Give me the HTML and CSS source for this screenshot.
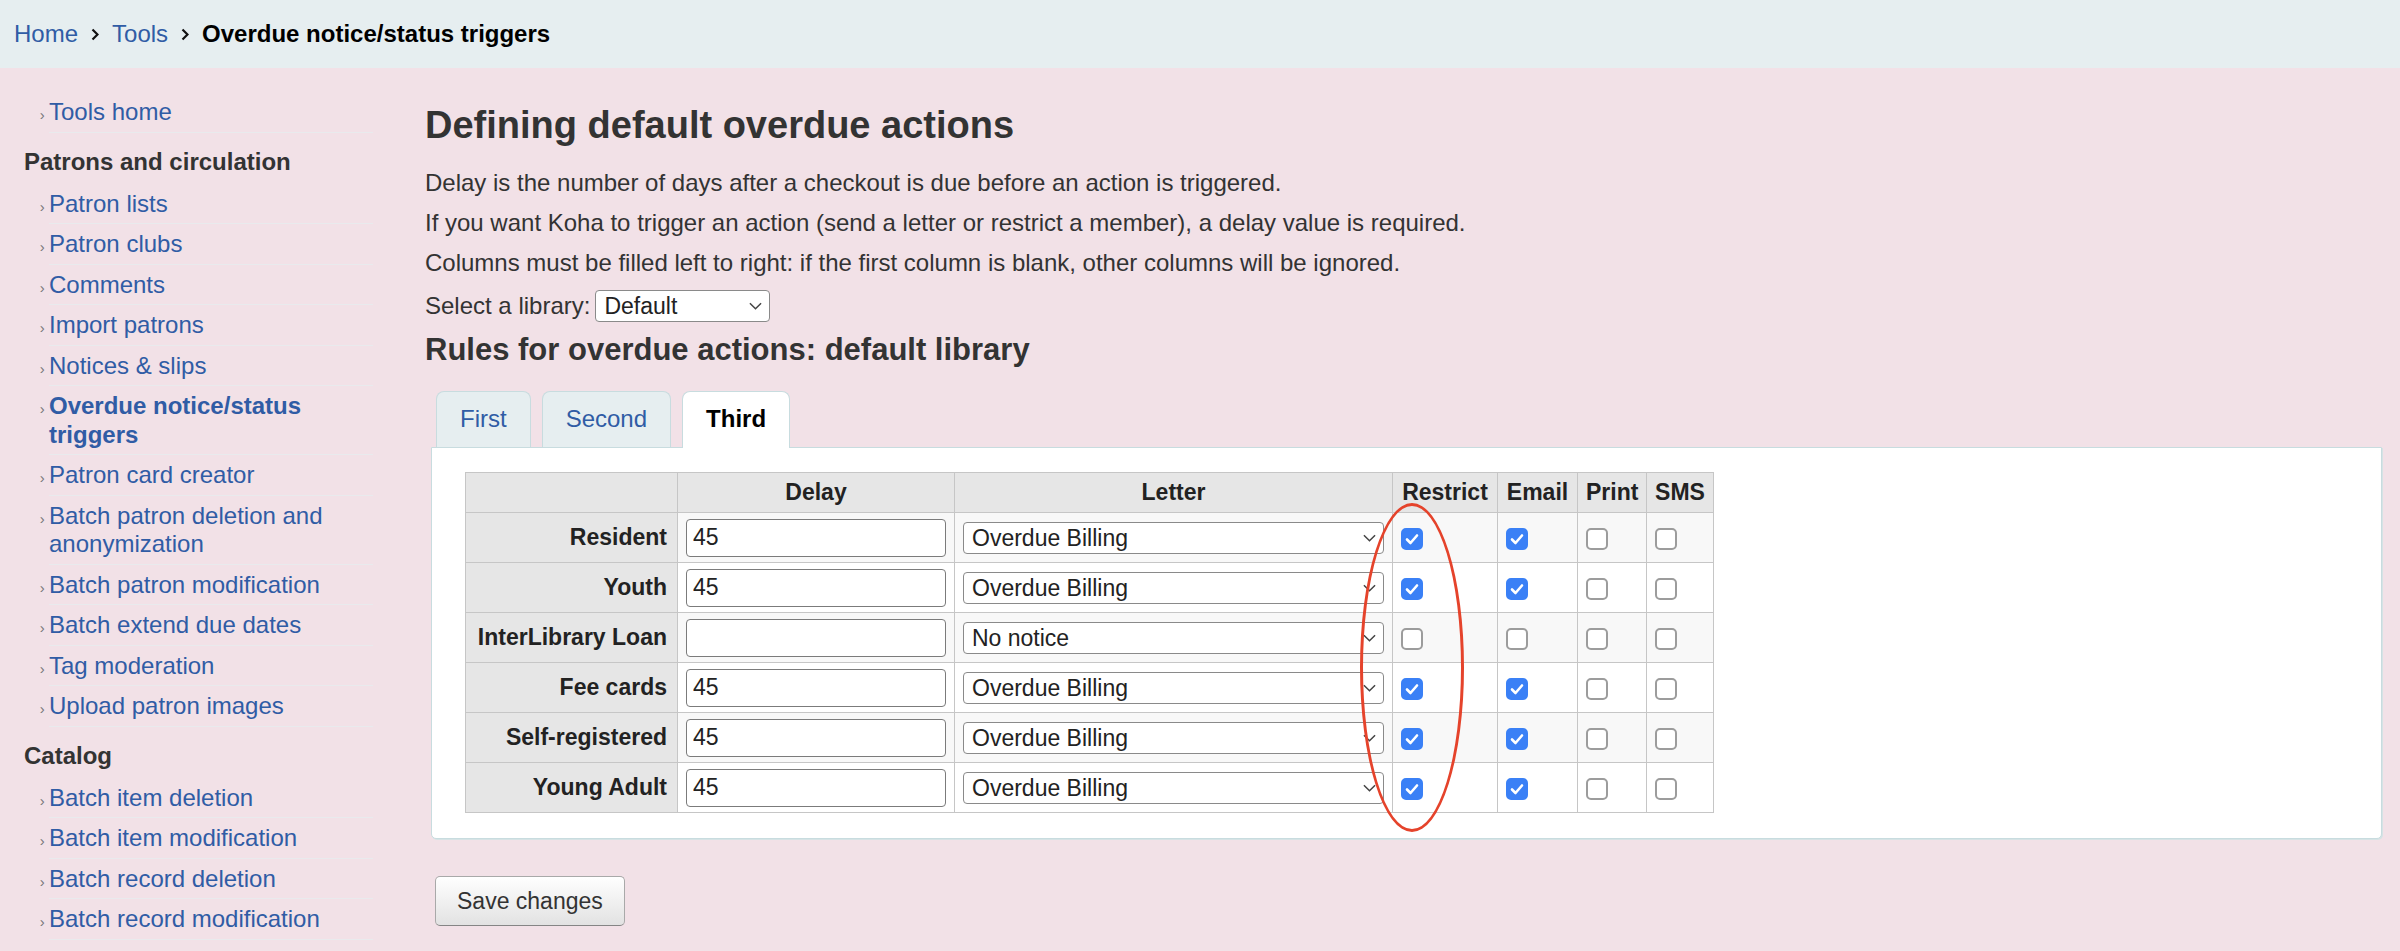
FILE: index.html
```html
<!DOCTYPE html>
<html lang="en">
<head>
<meta charset="UTF-8" />
<title>Overdue notice/status triggers › Tools › Koha</title>
<link rel="stylesheet" href="styles.css">
</head>
<body>

<nav class="breadcrumbs">
  <a href="#">Home</a>
  <svg class="crumb-sep" viewBox="0 0 8 13"><path d="M1.5 1.5 L6.5 6.5 L1.5 11.5" /></svg>
  <a href="#">Tools</a>
  <svg class="crumb-sep" viewBox="0 0 8 13"><path d="M1.5 1.5 L6.5 6.5 L1.5 11.5" /></svg>
  <span class="current">Overdue notice/status triggers</span>
</nav>

<div class="layout">
  <aside class="sidenav">
    <ul>
      <li><a href="#">Tools home</a></li>
    </ul>
    <h5>Patrons and circulation</h5>
    <ul>
      <li><a href="#">Patron lists</a></li>
      <li><a href="#">Patron clubs</a></li>
      <li><a href="#">Comments</a></li>
      <li><a href="#">Import patrons</a></li>
      <li><a href="#">Notices &amp; slips</a></li>
      <li class="active"><a href="#">Overdue notice/status triggers</a></li>
      <li><a href="#">Patron card creator</a></li>
      <li><a href="#">Batch patron deletion and anonymization</a></li>
      <li><a href="#">Batch patron modification</a></li>
      <li><a href="#">Batch extend due dates</a></li>
      <li><a href="#">Tag moderation</a></li>
      <li><a href="#">Upload patron images</a></li>
    </ul>
    <h5>Catalog</h5>
    <ul>
      <li><a href="#">Batch item deletion</a></li>
      <li><a href="#">Batch item modification</a></li>
      <li><a href="#">Batch record deletion</a></li>
      <li><a href="#">Batch record modification</a></li>
      <li><a href="#">Automatic item modifications by age</a></li>
    </ul>
  </aside>

  <main class="content">
    <h1>Defining default overdue actions</h1>
    <p>Delay is the number of days after a checkout is due before an action is triggered.</p>
    <p>If you want Koha to trigger an action (send a letter or restrict a member), a delay value is required.</p>
    <p>Columns must be filled left to right: if the first column is blank, other columns will be ignored.</p>

    <form>
      <div class="library-select">
        <label for="branch">Select a library:</label>
        <span class="select-wrap">
          <select id="branch" class="library"><option>Default</option></select>
          <svg class="chevron" viewBox="0 0 14 8"><path d="M1 1 L7 7 L13 1" /></svg>
        </span>
      </div>

      <h3>Rules for overdue actions: default library</h3>

      <div class="tabs-wrap">
        <ul class="tabs">
          <li><a href="#">First</a></li>
          <li><a href="#">Second</a></li>
          <li class="active"><a href="#">Third</a></li>
        </ul>

        <div class="panel">
          <table class="rules">
            <colgroup>
              <col style="width: 212px">
              <col style="width: 277px">
              <col style="width: 438px">
              <col style="width: 105px">
              <col style="width: 80px">
              <col style="width: 69px">
              <col style="width: 67px">
            </colgroup>
            <thead>
              <tr>
                <th></th>
                <th>Delay</th>
                <th>Letter</th>
                <th>Restrict</th>
                <th>Email</th>
                <th>Print</th>
                <th>SMS</th>
              </tr>
            </thead>
            <tbody>
              <tr>
                <th class="category">Resident</th>
                <td><input type="text" class="delay" value="45"></td>
                <td><span class="select-wrap wide"><select><option>Overdue Billing</option></select><svg class="chevron" viewBox="0 0 14 8"><path d="M1 1 L7 7 L13 1" /></svg></span></td>
                <td><span class="check"><input type="checkbox" checked><svg viewBox="0 0 22 22"><path d="M6 11.5 L9.5 15 L16 7.5" /></svg></span></td>
                <td><span class="check"><input type="checkbox" checked><svg viewBox="0 0 22 22"><path d="M6 11.5 L9.5 15 L16 7.5" /></svg></span></td>
                <td><span class="check"><input type="checkbox"><svg viewBox="0 0 22 22"><path d="M6 11.5 L9.5 15 L16 7.5" /></svg></span></td>
                <td><span class="check"><input type="checkbox"><svg viewBox="0 0 22 22"><path d="M6 11.5 L9.5 15 L16 7.5" /></svg></span></td>
              </tr>
              <tr>
                <th class="category">Youth</th>
                <td><input type="text" class="delay" value="45"></td>
                <td><span class="select-wrap wide"><select><option>Overdue Billing</option></select><svg class="chevron" viewBox="0 0 14 8"><path d="M1 1 L7 7 L13 1" /></svg></span></td>
                <td><span class="check"><input type="checkbox" checked><svg viewBox="0 0 22 22"><path d="M6 11.5 L9.5 15 L16 7.5" /></svg></span></td>
                <td><span class="check"><input type="checkbox" checked><svg viewBox="0 0 22 22"><path d="M6 11.5 L9.5 15 L16 7.5" /></svg></span></td>
                <td><span class="check"><input type="checkbox"><svg viewBox="0 0 22 22"><path d="M6 11.5 L9.5 15 L16 7.5" /></svg></span></td>
                <td><span class="check"><input type="checkbox"><svg viewBox="0 0 22 22"><path d="M6 11.5 L9.5 15 L16 7.5" /></svg></span></td>
              </tr>
              <tr>
                <th class="category">InterLibrary Loan</th>
                <td><input type="text" class="delay" value=""></td>
                <td><span class="select-wrap wide"><select><option>No notice</option></select><svg class="chevron" viewBox="0 0 14 8"><path d="M1 1 L7 7 L13 1" /></svg></span></td>
                <td><span class="check"><input type="checkbox"><svg viewBox="0 0 22 22"><path d="M6 11.5 L9.5 15 L16 7.5" /></svg></span></td>
                <td><span class="check"><input type="checkbox"><svg viewBox="0 0 22 22"><path d="M6 11.5 L9.5 15 L16 7.5" /></svg></span></td>
                <td><span class="check"><input type="checkbox"><svg viewBox="0 0 22 22"><path d="M6 11.5 L9.5 15 L16 7.5" /></svg></span></td>
                <td><span class="check"><input type="checkbox"><svg viewBox="0 0 22 22"><path d="M6 11.5 L9.5 15 L16 7.5" /></svg></span></td>
              </tr>
              <tr>
                <th class="category">Fee cards</th>
                <td><input type="text" class="delay" value="45"></td>
                <td><span class="select-wrap wide"><select><option>Overdue Billing</option></select><svg class="chevron" viewBox="0 0 14 8"><path d="M1 1 L7 7 L13 1" /></svg></span></td>
                <td><span class="check"><input type="checkbox" checked><svg viewBox="0 0 22 22"><path d="M6 11.5 L9.5 15 L16 7.5" /></svg></span></td>
                <td><span class="check"><input type="checkbox" checked><svg viewBox="0 0 22 22"><path d="M6 11.5 L9.5 15 L16 7.5" /></svg></span></td>
                <td><span class="check"><input type="checkbox"><svg viewBox="0 0 22 22"><path d="M6 11.5 L9.5 15 L16 7.5" /></svg></span></td>
                <td><span class="check"><input type="checkbox"><svg viewBox="0 0 22 22"><path d="M6 11.5 L9.5 15 L16 7.5" /></svg></span></td>
              </tr>
              <tr>
                <th class="category">Self-registered</th>
                <td><input type="text" class="delay" value="45"></td>
                <td><span class="select-wrap wide"><select><option>Overdue Billing</option></select><svg class="chevron" viewBox="0 0 14 8"><path d="M1 1 L7 7 L13 1" /></svg></span></td>
                <td><span class="check"><input type="checkbox" checked><svg viewBox="0 0 22 22"><path d="M6 11.5 L9.5 15 L16 7.5" /></svg></span></td>
                <td><span class="check"><input type="checkbox" checked><svg viewBox="0 0 22 22"><path d="M6 11.5 L9.5 15 L16 7.5" /></svg></span></td>
                <td><span class="check"><input type="checkbox"><svg viewBox="0 0 22 22"><path d="M6 11.5 L9.5 15 L16 7.5" /></svg></span></td>
                <td><span class="check"><input type="checkbox"><svg viewBox="0 0 22 22"><path d="M6 11.5 L9.5 15 L16 7.5" /></svg></span></td>
              </tr>
              <tr>
                <th class="category">Young Adult</th>
                <td><input type="text" class="delay" value="45"></td>
                <td><span class="select-wrap wide"><select><option>Overdue Billing</option></select><svg class="chevron" viewBox="0 0 14 8"><path d="M1 1 L7 7 L13 1" /></svg></span></td>
                <td><span class="check"><input type="checkbox" checked><svg viewBox="0 0 22 22"><path d="M6 11.5 L9.5 15 L16 7.5" /></svg></span></td>
                <td><span class="check"><input type="checkbox" checked><svg viewBox="0 0 22 22"><path d="M6 11.5 L9.5 15 L16 7.5" /></svg></span></td>
                <td><span class="check"><input type="checkbox"><svg viewBox="0 0 22 22"><path d="M6 11.5 L9.5 15 L16 7.5" /></svg></span></td>
                <td><span class="check"><input type="checkbox"><svg viewBox="0 0 22 22"><path d="M6 11.5 L9.5 15 L16 7.5" /></svg></span></td>
              </tr>
            </tbody>
          </table>

          <!-- red ring drawn round the Restrict column -->
          <div class="annotation"></div>
        </div>
      </div>

      <div class="actions">
        <button type="button">Save changes</button>
      </div>
    </form>
  </main>
</div>

</body>
</html>
```

FILE: styles.css
```css
body {
  margin: 0;
  background: #f2e1e7;
  color: #333;
  font-family: "Liberation Sans", Arial, sans-serif;
  font-size: 24px;
}

a {
  color: #305ca5;
  text-decoration: none;
}

/* Barra breadcrumb */
.breadcrumbs {
  display: flex;
  align-items: center;
  gap: 13px;
  height: 68px;
  padding: 0 14px;
  background: #e6eef0;
}

.breadcrumbs .current {
  color: #000;
  font-weight: bold;
}

.crumb-sep {
  width: 8px;
  height: 13px;
  fill: none;
  stroke: #111;
  stroke-width: 2.2;
}

.layout {
  display: grid;
  grid-template-columns: 373px 1fr;
  column-gap: 52px;
}

/* Menu laterale */
.sidenav {
  padding: 24px 0 0 24px;
}

.sidenav h5 {
  margin: 15px 0 8px;
  font-size: 24px;
  line-height: 28px;
  color: #333;
}

.sidenav ul {
  margin: 0;
  padding: 0 0 0 25px;
  list-style: none;
}

.sidenav li {
  display: list-item;
  list-style: outside;
  padding: 6px 0 5px;
  line-height: 28.5px;
  border-bottom: 1px solid #e9eaed;
}

.sidenav li::marker {
  content: "\203A  ";
  color: #777;
  font-size: 15px;
}

.sidenav li.active a {
  font-weight: bold;
}

/* Contenuto */
.content {
  padding-right: 18px;
}

.content h1 {
  margin: 35px 0 22px;
  font-size: 38px;
  line-height: 44px;
  color: #333;
}

.content p {
  margin: 0 0 12px;
  line-height: 28px;
}

form {
  margin: 0;
}

.library-select {
  display: flex;
  align-items: center;
  gap: 5px;
  height: 34px;
}

.content h3 {
  margin: 9px 0 0;
  font-size: 31px;
  line-height: 36px;
  color: #333;
}

/* Select con freccia disegnata */
.select-wrap {
  display: inline-grid;
  align-items: center;
}

.select-wrap.wide {
  display: grid;
}

.select-wrap select,
.select-wrap .chevron {
  grid-area: 1 / 1;
}

.select-wrap select {
  appearance: none;
  -webkit-appearance: none;
  height: 32px;
  margin: 0;
  padding: 0 30px 0 8px;
  border: 1px solid #8a8a8a;
  border-radius: 4px;
  background: #fff;
  color: #222;
  font: inherit;
  font-size: 23px;
}

select.library {
  width: 175px;
}

.select-wrap.wide select {
  width: 100%;
}

.select-wrap .chevron {
  justify-self: end;
  width: 13px;
  height: 8px;
  margin-right: 8px;
  fill: none;
  stroke: #444;
  stroke-width: 1.6;
  pointer-events: none;
}

/* Tab */
.tabs-wrap {
  margin: 23px 0 0 6px;
}

.tabs {
  display: flex;
  gap: 11px;
  margin: 0;
  padding: 0 0 0 5px;
  list-style: none;
}

.tabs li a {
  display: block;
  padding: 13px 23px 14px;
  line-height: 28px;
  border: 1px solid #c8dcdf;
  border-bottom: 0;
  border-radius: 8px 8px 0 0;
  background: #e6eef0;
}

.tabs li.active {
  position: relative;
  z-index: 1;
  margin-bottom: -1px;
}

.tabs li.active a {
  padding-bottom: 15px;
  background: #fff;
  color: #000;
  font-weight: bold;
}

.panel {
  position: relative;
  padding: 24px 33px 25px;
  border: 1px solid #c8dcdf;
  border-radius: 0 0 5px 5px;
  background: #fff;
  box-shadow: 1px 1px 0 #d6e3e5;
}

/* Tabella regole */
.rules {
  table-layout: fixed;
  width: 1248px;
  border-collapse: collapse;
  font-size: 23px;
}

.rules th,
.rules td {
  border: 1px solid #c6c6c6;
  padding: 0 8px;
  vertical-align: middle;
}

.rules thead tr {
  height: 40px;
}

.rules tbody tr {
  height: 50px;
}

.rules thead th {
  background: #e6e6e6;
  color: #222;
  text-align: center;
}

.rules th.category {
  background: #e6e6e6;
  color: #222;
  text-align: right;
  padding-right: 10px;
}

.rules tbody tr:nth-child(odd) td {
  background: #f8f8f8;
}

.rules tbody tr:nth-child(even) td {
  background: #fff;
}

.delay {
  box-sizing: border-box;
  width: 100%;
  height: 38px;
  margin: 0;
  padding: 0 6px;
  border: 1px solid #7b7b7b;
  border-radius: 4px;
  background: #fff;
  color: #222;
  font: inherit;
  font-size: 23px;
}

/* Checkbox stile mac */
.check {
  display: inline-grid;
  vertical-align: middle;
}

.check input,
.check svg {
  grid-area: 1 / 1;
  width: 22px;
  height: 22px;
  margin: 0;
}

.check input {
  appearance: none;
  -webkit-appearance: none;
  box-sizing: border-box;
  border: 2px solid #9c9c9c;
  border-radius: 5px;
  background: #fff;
}

.check input:checked {
  border-color: #3a80f6;
  background: #3a80f6;
}

.check svg {
  visibility: hidden;
  fill: none;
  stroke: #fff;
  stroke-width: 2.6;
  stroke-linecap: round;
  stroke-linejoin: round;
  pointer-events: none;
}

.check input:checked + svg {
  visibility: visible;
}

.annotation {
  position: absolute;
  left: 928px;
  top: 55px;
  box-sizing: border-box;
  width: 104px;
  height: 329px;
  border: 3px solid #e5432b;
  border-radius: 50%;
  pointer-events: none;
}

/* Pulsante salva */
.actions {
  margin-top: 37px;
  padding-left: 10px;
}

.actions button {
  height: 50px;
  padding: 0 21px;
  border: 1px solid #a9a9a9;
  border-bottom-color: #858585;
  border-radius: 5px;
  background: linear-gradient(#ffffff, #e2e2e2);
  color: #333;
  font: inherit;
  font-size: 23px;
  cursor: pointer;
}
```
